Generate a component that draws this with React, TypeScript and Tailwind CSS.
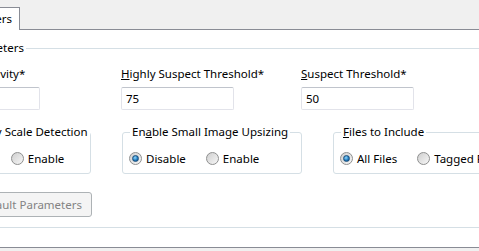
import React from "react";

function Radio({ checked, label }: { checked?: boolean; label: string }) {
    return (
        <label className="flex items-center gap-[4px]">
            <span className="w-[13px] h-[13px] rounded-full border border-[#8e8f8f] bg-linear-to-br from-[#cfcfcf] to-[#f7f7f7] flex items-center justify-center">
                {checked && <span className="w-[7px] h-[7px] rounded-full border border-[#1d4f7a] bg-[radial-gradient(circle_at_40%_35%,#8fd8ff,#1a74b8_60%,#0b4a80)]" />}
            </span>
            <span>{label}</span>
        </label>
    );
}

function Group({ title, width, children }: { title: React.ReactNode; width: string; children: React.ReactNode }) {
    return (
        <fieldset className={`${width} min-w-0 shrink-0 border border-[#d5dfe5] rounded-[3px] px-[6px] pb-[6px]`}>
            <legend className="px-[2px] ml-[1px] leading-[16px] whitespace-nowrap">{title}</legend>
            <div className="flex items-center gap-[20px] mt-[10px] whitespace-nowrap">{children}</div>
        </fieldset>
    );
}

function Field({ label, value, width }: { label: React.ReactNode; value: string; width: string }) {
    return (
        <div className={`${width} shrink-0 flex flex-col gap-[5px]`}>
            <span className="leading-[16px] whitespace-nowrap">{label}</span>
            <div className="w-[113px] h-[23px] border border-[#e2e3ea] border-t-[#c0c4cc] rounded-[2px] flex items-center px-[4px]">{value}</div>
        </div>
    );
}

export default function App() {
    return (
        <div className="w-[479px] h-[251px] overflow-hidden bg-[#f0f0f0] text-[11.5px] text-black font-['Noto_Sans',sans-serif]">
            {/* tab strip */}
            <div className="h-[30px] flex items-end">
                <div className="ml-[-60px] w-[80px] h-[23px] shrink-0 bg-white border border-b-0 border-[#898c95] flex items-center justify-end pr-[7px] leading-[16px]">
                    Parameters
                </div>
                <div className="flex-1 h-px bg-[#898c95]" />
            </div>

            {/* tab page */}
            <div className="h-[218px] bg-white border-b border-[#898c95] pt-[10px]">
                <fieldset className="ml-[-82px] w-[600px] h-[188px] border border-[#d5dfe5] px-[8px] pt-[10px]">
                    <legend className="w-[99px] pr-[2px] leading-[16px]">
                        <div className="flex justify-end whitespace-nowrap overflow-hidden">Image Parameters</div>
                    </legend>

                    <div className="flex">
                        <Field width="w-[194px]" label="Image Sensitivity*" value="" />
                        <Field width="w-[180px]" label={<><u>H</u>ighly Suspect Threshold*</>} value="75" />
                        <Field width="w-[180px]" label={<><u>S</u>uspect Threshold*</>} value="50" />
                    </div>

                    <div className="flex gap-[31px] mt-[14px]">
                        <Group width="w-[164px]" title="Enable Gray Scale Detection">
                            <Radio label="Disable" checked />
                            <Radio label="Enable" />
                        </Group>
                        <Group width="w-[180px]" title={<>En<u>a</u>ble Small Image Upsizing</>}>
                            <Radio label="Disable" checked />
                            <Radio label="Enable" />
                        </Group>
                        <Group width="w-[200px]" title={<><u>F</u>iles to Include</>}>
                            <Radio label="All Files" checked />
                            <Radio label="Tagged Files" />
                        </Group>
                    </div>

                    <button className="mt-[18px] w-[165px] h-[25px] border border-[#adb2b5] rounded-[3px] bg-[#f4f4f4] text-[#838383] flex items-center justify-end pr-[9px]">
                        Restore Default Parameters
                    </button>
                </fieldset>
            </div>
        </div>
    );
}
